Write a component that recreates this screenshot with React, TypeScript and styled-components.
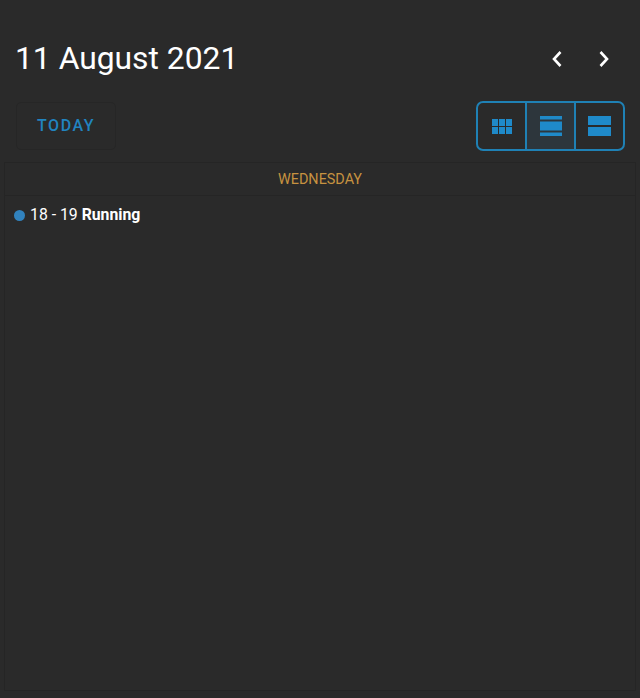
import React from "react";
import styled, { createGlobalStyle } from "styled-components";

const Global = createGlobalStyle`
  html, body { margin: 0; padding: 0; background: #2a2a2a; }
  body { font-family: Roboto, "Liberation Sans", sans-serif; color: #fff; }
  #root { width: 640px; height: 698px; overflow: hidden; }
`;

const Page = styled.div`
  width: 640px;
  height: 698px;
  box-sizing: border-box;
  padding: 36px 0 7px;
  display: flex;
  flex-direction: column;
  background: #2a2a2a;
`;

const TitleRow = styled.div`
  height: 45px;
  padding: 0 16px 0 15px;
  display: flex;
  align-items: center;
  justify-content: space-between;
`;

const Title = styled.h2`
  margin: 0;
  font-size: 31.8px;
  font-weight: 400;
  line-height: 45px;
  color: #fff;
`;

const Arrows = styled.div`
  display: flex;
  gap: 27px;
  padding-right: 10px;
`;

const Arrow = styled.button`
  width: 20px;
  height: 20px;
  padding: 0;
  border: 0;
  background: none;
  display: flex;
  align-items: center;
  justify-content: center;
`;

const Toolbar = styled.div`
  margin-top: 20px;
  padding: 0 15px 0 16px;
  display: flex;
  align-items: center;
  justify-content: space-between;
`;

const TodayButton = styled.button`
  width: 100px;
  height: 48px;
  box-sizing: border-box;
  padding: 0 0 2px;
  background: none;
  border: 1px solid #262626;
  border-radius: 5px;
  color: #2184c0;
  font-family: inherit;
  font-size: 16px;
  font-weight: 500;
  letter-spacing: 1.5px;
`;

const ViewGroup = styled.div`
  display: flex;
  width: 149px;
  height: 50px;
  box-sizing: border-box;
  border: 2px solid #1f81b5;
  border-radius: 7px;
  overflow: hidden;
`;

const ViewButton = styled.button<{ $active?: boolean; $first?: boolean }>`
  flex: 1;
  padding: 0;
  border: 0;
  border-left: ${(p) => (p.$first ? "0" : "2px solid #1f81b5")};
  background: ${(p) => (p.$active ? "#2d363c" : "transparent")};
  display: flex;
  align-items: center;
  justify-content: center;
`;

const Calendar = styled.div`
  flex: 1;
  margin: 11px 4px 0;
  border: 1px solid #252525;
  display: flex;
  flex-direction: column;
`;

const DayHeader = styled.div`
  height: 32px;
  border-bottom: 1px solid #252525;
  display: flex;
  align-items: center;
  justify-content: center;
  color: #c69240;
  font-size: 14.4px;
`;

const Event = styled.div`
  padding: 10px 0 0 9px;
  display: flex;
  align-items: center;
  gap: 5px;
  font-size: 15.8px;
  line-height: 18px;
  color: #fff;
`;

const Dot = styled.span`
  width: 11px;
  height: 11px;
  border-radius: 50%;
  background: #3182bd;
`;

const EventName = styled.b`
  font-weight: 700;
`;

const Chevron = ({ d }: { d: string }) => (
  <svg width="12" height="18" viewBox="0 0 12 18" fill="none">
    <path d={d} stroke="#fff" strokeWidth="2.6" />
  </svg>
);

const blue = "#1f8ac9";

const MonthIcon = () => (
  <svg width="20" height="15" viewBox="0 0 20 15" fill={blue}>
    <rect x="0" y="0" width="6" height="7" />
    <rect x="7" y="0" width="6" height="7" />
    <rect x="14" y="0" width="6" height="7" />
    <rect x="0" y="8" width="6" height="7" />
    <rect x="7" y="8" width="6" height="7" />
    <rect x="14" y="8" width="6" height="7" />
  </svg>
);

const WeekIcon = () => (
  <svg width="22" height="20" viewBox="0 0 22 20" fill={blue}>
    <rect x="0" y="0" width="22" height="3.5" />
    <rect x="0" y="5.5" width="22" height="9" />
    <rect x="0" y="16.5" width="22" height="3.5" />
  </svg>
);

const DayIcon = () => (
  <svg width="23" height="20" viewBox="0 0 23 20" fill={blue}>
    <rect x="0" y="0" width="23" height="9" />
    <rect x="0" y="11" width="23" height="9" />
  </svg>
);

export default function App() {
  return (
    <Page>
      <Global />
      <TitleRow>
        <Title>11 August 2021</Title>
        <Arrows>
          <Arrow aria-label="Previous"><Chevron d="M9.5 2 L3 9 L9.5 16" /></Arrow>
          <Arrow aria-label="Next"><Chevron d="M2.5 2 L9 9 L2.5 16" /></Arrow>
        </Arrows>
      </TitleRow>
      <Toolbar>
        <TodayButton>TODAY</TodayButton>
        <ViewGroup>
          <ViewButton $first aria-label="Month"><MonthIcon /></ViewButton>
          <ViewButton $active aria-label="Week"><WeekIcon /></ViewButton>
          <ViewButton aria-label="Day"><DayIcon /></ViewButton>
        </ViewGroup>
      </Toolbar>
      <Calendar>
        <DayHeader>WEDNESDAY</DayHeader>
        <Event>
          <Dot />
          <span>18 - 19 <EventName>Running</EventName></span>
        </Event>
      </Calendar>
    </Page>
  );
}
